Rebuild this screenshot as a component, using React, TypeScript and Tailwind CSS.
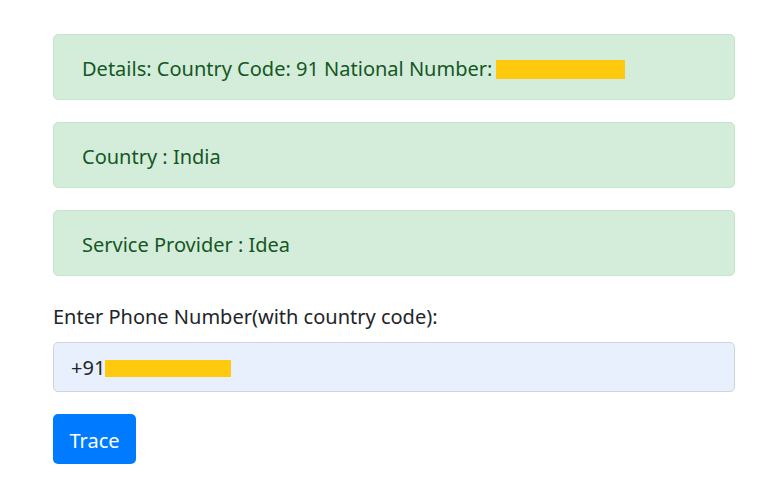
import React from 'react'

const font = { fontFamily: '"Noto Sans", "Open Sans", sans-serif' }

function Redacted({ className }: { className: string }) {
  return <span className={`inline-block bg-[#ffc90e] align-middle ${className}`} />
}

export default function App() {
  return (
    <div className="min-h-screen bg-white" style={font}>
      <div className="ml-[53px] mr-[33px] pt-[34px]">
        <div className="mb-[22px] flex h-[66px] items-center rounded-[5px] border border-[#c3e6cb] bg-[#d4edda] px-[28px] pt-[4px] text-[20px] text-[#155724]">
          <span>Details: Country Code: 91 National Number: </span>
          <Redacted className="ml-[4px] h-[19px] w-[129px]" />
        </div>
        <div className="mb-[22px] flex h-[66px] items-center rounded-[5px] border border-[#c3e6cb] bg-[#d4edda] px-[28px] pt-[4px] text-[20px] text-[#155724]">
          Country : India
        </div>
        <div className="mb-[22px] flex h-[66px] items-center rounded-[5px] border border-[#c3e6cb] bg-[#d4edda] px-[28px] pt-[4px] text-[20px] text-[#155724]">
          Service Provider : Idea
        </div>

        <label className="block pt-[4px] text-[20px] leading-[30px] text-[#212529]">
          Enter Phone Number(with country code):
        </label>
        <div className="mt-[10px] flex h-[50px] items-center rounded-[5px] border border-[#ced4da] bg-[#e8f0fe] px-[17px] pt-[2px] text-[20px] text-[#212529]">
          <span>+91</span>
          <Redacted className="h-[17px] w-[126px]" />
        </div>

        <button className="mt-[22px] h-[50px] w-[83px] rounded-[5px] bg-[#007bff] pt-[3px] text-[20px] text-white">
          Trace
        </button>
      </div>
    </div>
  )
}
